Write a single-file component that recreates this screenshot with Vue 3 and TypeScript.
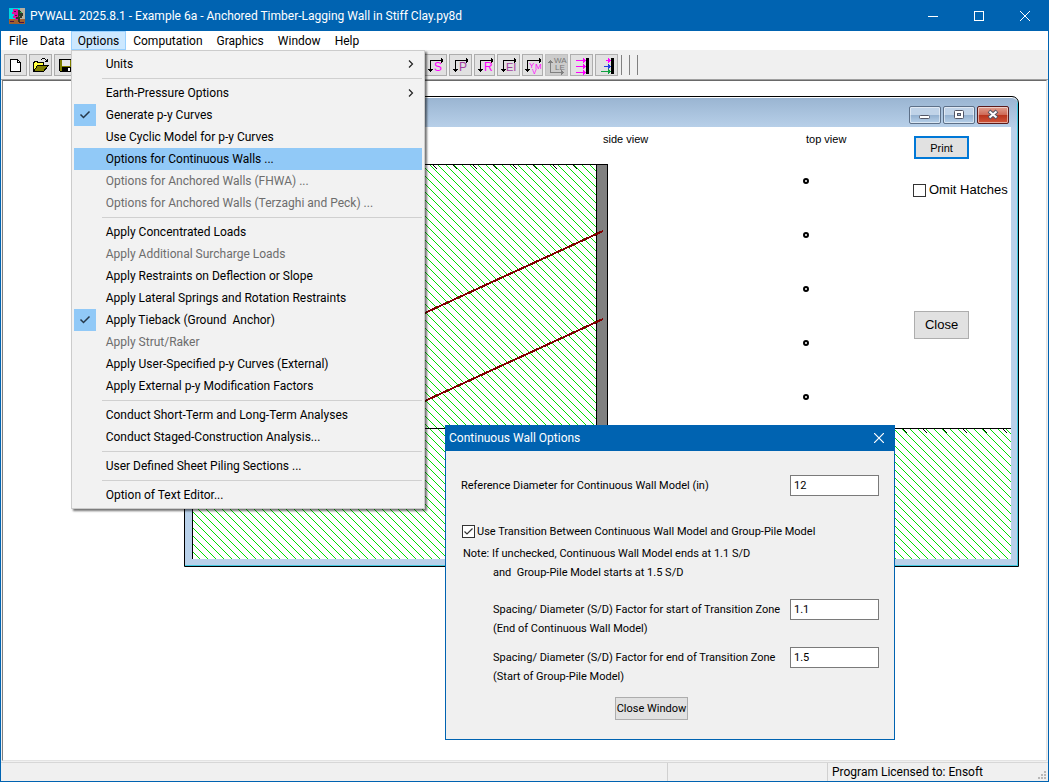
<script setup lang="ts">
import { ref } from 'vue'

interface MenuEntry {
  label: string
  checked?: boolean
  disabled?: boolean
  active?: boolean
  submenu?: boolean
}

const menus = ['File', 'Data', 'Options', 'Computation', 'Graphics', 'Window', 'Help']

const groups: MenuEntry[][] = [
  [{ label: 'Units', submenu: true }],
  [
    { label: 'Earth-Pressure Options', submenu: true },
    { label: 'Generate p-y Curves', checked: true },
    { label: 'Use Cyclic Model for p-y Curves' },
    { label: 'Options for Continuous Walls ...', active: true },
    { label: 'Options for Anchored Walls (FHWA) ...', disabled: true },
    { label: 'Options for Anchored Walls (Terzaghi and Peck) ...', disabled: true },
  ],
  [
    { label: 'Apply Concentrated Loads' },
    { label: 'Apply Additional Surcharge Loads', disabled: true },
    { label: 'Apply Restraints on Deflection or Slope' },
    { label: 'Apply Lateral Springs and Rotation Restraints' },
    { label: 'Apply Tieback (Ground  Anchor)', checked: true },
    { label: 'Apply Strut/Raker', disabled: true },
    { label: 'Apply User-Specified p-y Curves (External)' },
    { label: 'Apply External p-y Modification Factors' },
  ],
  [
    { label: 'Conduct Short-Term and Long-Term Analyses' },
    { label: 'Conduct Staged-Construction Analysis...' },
  ],
  [{ label: 'User Defined Sheet Piling Sections ...' }],
  [{ label: 'Option of Text Editor...' }],
]

const plotTools = [
  { id: 's', text: 'S', color: '#ff00ff', narrow: false },
  { id: 'p', text: 'P', color: '#a040a0', narrow: false },
  { id: 'r', text: 'R', color: '#ff00ff', narrow: true },
  { id: 'ei', text: 'EI', color: '#a040a0', narrow: false },
]

const upperTicks = Array.from({ length: 20 }, (_, i) => 1 + i * 20)
const lowerTicks = Array.from({ length: 21 }, (_, i) => 411 + i * 20)
const piles = [54, 108, 162, 216, 270]

const diameter = ref('12')
const startFactor = ref('1.1')
const endFactor = ref('1.5')
const useTransition = ref(true)
const omitHatches = ref(false)
</script>

<template>
  <div class="app">
    <header class="titlebar">
      <svg class="logo" width="16" height="16" shape-rendering="crispEdges">
        <rect width="16" height="16" fill="#00d8e0" />
        <rect x="11" width="5" height="12" fill="#b8b0a0" />
        <rect y="11" width="16" height="5" fill="#a06030" />
        <path d="M4 1h5v2h1v9H6v-2H4V8h1V6H3V4h1z" fill="#e010a0" />
        <path d="M9 2h2v1h1v2h2v3h-1v2h-2v4H9v-3H7V9h2z" fill="#303828" />
        <path d="M5 3h2v1H5zM6 7h2v1H6zM1 13h4v1H1zM10 14h5v1h-5z" fill="#501040" />
        <path d="M11 4h2v1h-2zM10 8h1v1h-1z" fill="#30a050" />
      </svg>
      <h1>PYWALL 2025.8.1 - Example 6a - Anchored Timber-Lagging Wall in Stiff Clay.py8d</h1>
      <div class="winbtns">
        <button aria-label="Minimize"><svg width="10" height="10" shape-rendering="crispEdges"><path d="M0 5.5h10" stroke="#fff" /></svg></button>
        <button aria-label="Maximize"><svg width="10" height="10" shape-rendering="crispEdges"><path d="M.5 .5h9v9h-9z" fill="none" stroke="#fff" /></svg></button>
        <button aria-label="Close"><svg width="10" height="10"><path d="M0 0l10 10M10 0L0 10" stroke="#fff" /></svg></button>
      </div>
    </header>

    <nav class="menubar">
      <div v-for="m in menus" :key="m" class="menu">
        <button :class="{ open: m === 'Options', short: m === 'File' || m === 'Data' }">{{ m }}</button>
        <div v-if="m === 'Options'" class="dropdown" role="menu">
          <div v-for="(g, gi) in groups" :key="gi" class="group">
            <button
              v-for="e in g"
              :key="e.label"
              role="menuitem"
              class="entry"
              :class="{ active: e.active }"
              :disabled="e.disabled"
            >
              <span class="mark" :class="{ on: e.checked }">
                <svg v-if="e.checked" width="12" height="10"><path d="M1.5 4.5l3 3L10.500 1.500" fill="none" stroke="#26384a" stroke-width="1.500" /></svg>
              </span>
              <span class="text">{{ e.label }}</span>
              <svg v-if="e.submenu" class="arrow" width="6" height="8"><path d="M1 .5L4.500 4L1 7.500" fill="none" stroke="#222" stroke-width="1.200" /></svg>
            </button>
          </div>
        </div>
      </div>
    </nav>

    <div class="toolbar" role="toolbar">
      <button class="tool" aria-label="New">
        <svg width="21" height="20" shape-rendering="crispEdges">
          <path d="M5.500 4.500h7l3 3v9h-10z" fill="#fff" stroke="#000" /><path d="M12.500 4.500v3h3" fill="none" stroke="#000" />
        </svg>
      </button>
      <button class="tool" aria-label="Open">
        <svg width="21" height="20" shape-rendering="crispEdges">
          <path d="M3.500 16.500v-9h1v-1h3v1h6v3" fill="#ffff40" stroke="#000" />
          <path d="M3.500 16.500l4-6h11l-5 6z" fill="#808000" stroke="#000" />
          <path d="M11 4.500h1M12 3.500h3M15 4.500h1M16 5.500h1M17 6.500h1M15 6.500h3M17.500 4v3" stroke="#000" />
        </svg>
      </button>
      <button class="tool" aria-label="Save">
        <svg width="21" height="20" shape-rendering="crispEdges">
          <path d="M4.500 4.500h13v12h-12l-1-1z" fill="#808000" stroke="#000" />
          <rect x="7" y="5" width="8" height="6" fill="#e8e8e8" /><path d="M7 12h9v4H7z" /><rect x="13" y="13" width="2" height="3" fill="#fff" />
        </svg>
      </button>
      <span class="toolgap"></span>
      <button v-for="t in plotTools" :key="t.id" class="tool" :class="{ narrow: t.narrow }" :aria-label="'Plot ' + t.text">
        <svg width="21" height="20" shape-rendering="crispEdges">
          <path d="M5.500 17V5.500H18M16.500 3v5M17.500 4v3M3 14.500h5M4 15.500h3" fill="none" stroke="#000" />
          <text :x="t.text === 'EI' ? 8 : 9" y="16" :font-size="t.text === 'EI' ? 11 : 12" :fill="t.color">{{ t.text }}</text>
        </svg>
      </button>
      <button class="tool narrow" aria-label="Plot deflection, moment and shear">
        <svg width="21" height="20" shape-rendering="crispEdges">
          <path d="M4.500 17V5.500H18M16.500 3v5M17.500 4v3M2 14.500h5M3 15.500h3" fill="none" stroke="#000" />
          <text x="6" y="13" font-size="8" fill="#ff00ff">Y</text>
          <text x="12" y="14" font-size="8" fill="#ff00ff">M</text>
          <text x="9" y="19" font-size="7" fill="#ff00ff">V</text>
        </svg>
      </button>
      <button class="tool off" aria-label="Wale" disabled>
        <svg width="21" height="20" shape-rendering="crispEdges">
          <path d="M4.500 5v12.500H18M2 7.500h5M3 6.500h3M15.500 15v5M16.500 16v3" fill="none" stroke="#808080" />
          <text x="8" y="8" font-size="8" fill="#777">WA</text>
          <text x="9" y="15" font-size="8" fill="#777">LE</text>
        </svg>
      </button>
      <button class="tool" aria-label="Distributed loads">
        <svg width="21" height="20" shape-rendering="crispEdges">
          <path d="M5 5.500h10M5 11.500h10M5 17.500h10M12.500 3v5M13.500 4v3M12.500 9v5M13.500 10v3M12.500 15v5M13.500 16v3" stroke="#ff00ff" />
          <rect x="15" y="3" width="3" height="16" />
        </svg>
      </button>
      <button class="tool" aria-label="Combined loads">
        <svg width="21" height="20" shape-rendering="crispEdges">
          <path d="M10 5.500h5M12.500 3v5M13.500 4v3" stroke="#ff00ff" />
          <path d="M8 11.500h7M12.500 9v5M13.500 10v3" stroke="#2040e0" />
          <path d="M5 16.500h10M12.500 14v5M13.500 15v3" stroke="#10a040" />
          <rect x="15" y="3" width="3" height="16" />
        </svg>
      </button>
      <i class="bar"></i><i class="bar"></i><i class="bar"></i>
    </div>

    <main class="desktop">
      <section class="child">
        <div class="childbar">
          <button aria-label="Minimize view"><svg width="30" height="16"><rect x="9.500" y="8.500" width="10" height="3" rx="1" fill="#fff" stroke="#535666" /></svg></button>
          <button aria-label="Restore view"><svg width="30" height="16"><rect x="10.500" y="3.500" width="9" height="8" rx="1" fill="#fff" stroke="#535666" /><rect x="13.500" y="6.500" width="3" height="2" fill="#9fbbd8" stroke="#535666" /></svg></button>
          <button class="red" aria-label="Close view"><svg width="30" height="16"><path d="M11 4l8 7M19 4l-8 7" stroke="#535666" stroke-width="4" /><path d="M11.500 4.500l7 6M18.500 4.500l-7 6" stroke="#fff" stroke-width="2" /></svg></button>
        </div>
        <div class="view">
          <svg class="drawing">
            <defs>
              <pattern id="hatch" width="8" height="8" patternUnits="userSpaceOnUse">
                <g fill="#00e000" shape-rendering="crispEdges">
                  <rect v-for="n in 8" :key="n" :x="n - 1" :y="n - 1" width="1" height="1" />
                </g>
              </pattern>
            </defs>
            <rect x="0" y="38" width="404" height="264" fill="url(#hatch)" />
            <rect x="0" y="302" width="100%" height="100%" fill="url(#hatch)" />
            <g shape-rendering="crispEdges" stroke="#000" fill="none">
              <path v-for="x in upperTicks" :key="'u' + x" :d="`M${x} 38.500h1m0 1h1m0 1h1m0 1h1`" />
              <path v-for="x in lowerTicks" :key="'l' + x" :d="`M${x} 302.500h1m0 1h1m0 1h1m0 1h1`" />
              <line x1="0" y1="301.500" x2="100%" y2="301.500" />
              <path d="M0 37.500h416M.5 37v395" />
              <rect x="404.500" y="37.500" width="11" height="330" fill="#808080" />
            </g>
            <path d="M148 225L411 104M148 313L411 192" stroke="#800000" stroke-width="2" shape-rendering="crispEdges" />
            <circle v-for="y in piles" :key="y" cx="614" :cy="y" r="2" fill="#fff" stroke="#000" stroke-width="2" />
            <text x="411" y="16" font-size="11">side view</text>
            <text x="614" y="16" font-size="11">top view</text>
          </svg>
          <div class="controls">
            <button class="print">Print</button>
            <label class="omit"><input v-model="omitHatches" type="checkbox" class="box" />Omit Hatches</label>
            <button class="close">Close</button>
          </div>
        </div>
      </section>

      <section class="dialog" role="dialog" aria-label="Continuous Wall Options">
        <div class="dialogbar">
          <h2>Continuous Wall Options</h2>
          <button aria-label="Close dialog"><svg width="10" height="10"><path d="M0 0l10 10M10 0L0 10" stroke="#fff" stroke-width="1.200" /></svg></button>
        </div>
        <form class="form" @submit.prevent>
          <div class="row">
            <label for="dia">Reference Diameter for Continuous Wall Model (in)</label>
            <input id="dia" v-model="diameter" type="text" />
          </div>
          <label class="transition"><input v-model="useTransition" type="checkbox" class="box" />Use Transition Between Continuous Wall Model and Group-Pile Model</label>
          <p class="note">Note: If unchecked, Continuous Wall Model ends at 1.1 S/D</p>
          <p class="note inner">and&nbsp; Group-Pile Model starts at 1.5 S/D</p>
          <div class="row factor">
            <label for="start">Spacing/ Diameter (S/D) Factor for start of Transition Zone<br />(End of Continuous Wall Model)</label>
            <input id="start" v-model="startFactor" type="text" />
          </div>
          <div class="row factor">
            <label for="end">Spacing/ Diameter (S/D) Factor for end of Transition Zone<br />(Start of Group-Pile Model)</label>
            <input id="end" v-model="endFactor" type="text" />
          </div>
          <button type="button" class="closewin">Close Window</button>
        </form>
      </section>
    </main>

    <footer class="status">
      <span class="pane"></span>
      <span class="pane mid"></span>
      <span class="pane license">Program Licensed to: Ensoft</span>
      <svg class="grip" width="9" height="9" shape-rendering="crispEdges" fill="#b8b8b8">
        <path d="M6 0h2v2H6zM3 3h2v2H3zM6 3h2v2H6zM0 6h2v2H0zM3 6h2v2H3zM6 6h2v2H6z" />
      </svg>
    </footer>
  </div>
</template>

<style>
body {
  margin: 0;
}
</style>

<style scoped>
* {
  box-sizing: border-box;
}
.app {
  display: flex;
  flex-direction: column;
  height: 100vh;
  border: 1px solid #0063b1;
  border-top: 0;
  background: #f0f0f0;
  color: #000;
  font: 12px/16px Roboto, sans-serif;
  overflow: hidden;
}
button {
  font: inherit;
  color: inherit;
  padding: 0;
  margin: 0;
  border: 0;
  border-radius: 0;
  background: none;
}
h1,
h2,
p {
  margin: 0;
  font: inherit;
}
svg {
  display: block;
}
.titlebar {
  display: flex;
  align-items: center;
  flex: 0 0 31px;
  padding-left: 8px;
  background: #0063b1;
  color: #fff;
}
.titlebar h1 {
  flex: 1;
  margin-left: 5px;
  white-space: nowrap;
}
.winbtns {
  display: flex;
}
.winbtns button {
  display: grid;
  place-items: center;
  width: 46px;
  height: 31px;
}
.menubar {
  display: flex;
  flex: 0 0 19px;
  padding-left: 2px;
  background: #fff;
}
.menu {
  position: relative;
}
.menu > button {
  height: 19px;
  padding: 1px 7px 0;
  line-height: 18px;
}
.menu > .short {
  padding: 1px 6px 0;
}
.menu > .open {
  padding: 0 6px;
  border: 1px solid #99d1ff;
  background: #cce8ff;
}
.dropdown {
  position: absolute;
  z-index: 10;
  top: 19px;
  left: 0;
  width: 354px;
  padding: 2px;
  border: 1px solid #ccc;
  background: #f2f2f2;
  box-shadow: 2px 2px 2px rgba(0, 0, 0, 0.55);
}
.group + .group::before {
  content: "";
  display: block;
  height: 1px;
  margin: 3px 0 3px 28px;
  background: #d0d0d0;
}
.entry {
  display: flex;
  align-items: center;
  width: 100%;
  height: 22px;
  text-align: left;
}
.entry.active {
  background: #91c9f7;
}
.entry:disabled {
  color: #6d6d6d;
}
.mark {
  display: grid;
  place-items: center;
  width: 22px;
  height: 22px;
  margin-right: 10px;
}
.mark.on {
  background: #91c9f7;
}
.text {
  flex: 1;
  white-space: pre;
}
.arrow {
  margin-right: 8px;
}
.toolbar {
  display: flex;
  flex: 0 0 30px;
  gap: 2px;
  padding: 4px 3px 3px;
  border-bottom: 1px solid #a0a0a0;
}
.tool {
  flex: none;
  width: 23px;
  height: 22px;
  border: 1px solid #adadad;
  background: #e1e1e1;
}
.tool.narrow {
  width: 21px;
}
.tool.off {
  background: #ccc;
  border-color: #bfbfbf;
}
.tool text {
  font-family: "Liberation Sans", Arial, sans-serif;
}
.toolgap {
  width: 343px;
}
.bar {
  width: 1px;
  height: 20px;
  margin: 1px 4px 0 1px;
  background: #808080;
}
.desktop {
  position: relative;
  flex: 1;
  margin: 0 1px 1px;
  border: 1px solid #e3e3e3;
  border-top-color: #696969;
  border-left-color: #808080;
  background: #fff;
}
.child {
  position: absolute;
  top: 15px;
  left: 181px;
  width: 835px;
  height: 471px;
  display: flex;
  flex-direction: column;
  padding: 0 7px 7px;
  border: 1px solid #000;
  border-radius: 7px 7px 0 0;
  background: linear-gradient(#99b4d1, #b9d1ea 32px);
  box-shadow: inset 0 1px #fff, inset -1px -1px #40c8e0;
}
.childbar {
  display: flex;
  justify-content: flex-end;
  gap: 2px;
  height: 30px;
  padding: 9px 2px 0 0;
}
.childbar button {
  width: 32px;
  height: 18px;
  border: 1px solid #5d7088;
  border-radius: 2px;
  background: linear-gradient(#c0d3e8 48%, #93b0cf 50%, #b6d0ea);
  box-shadow: inset 0 0 0 1px rgba(255, 255, 255, 0.5);
}
.childbar .red {
  border-color: #5a1a1a;
  background: linear-gradient(#e0a090 0, #cf6a57 48%, #b8331c 50%, #d0553a);
}
.view {
  position: relative;
  flex: 1;
  background: #fff;
}
.drawing {
  position: absolute;
  inset: 0;
  width: 100%;
  height: 100%;
  font-family: "Liberation Sans", Arial, sans-serif;
}
.controls {
  position: relative;
  display: flex;
  flex-direction: column;
  align-items: flex-start;
  width: 98px;
  margin-left: auto;
  padding-top: 9px;
  font: 13px/16px "Liberation Sans", Arial, sans-serif;
}
.print {
  width: 55px;
  height: 23px;
  margin-left: 1px;
  border: 2px solid #0078d7;
  background: #e1e1e1;
  font-size: 11px;
}
.omit {
  display: flex;
  align-items: center;
  gap: 3px;
  margin-top: 23px;
  white-space: nowrap;
}
.close {
  width: 55px;
  height: 28px;
  margin: 113px 0 0 1px;
  border: 1px solid #adadad;
  background: #e1e1e1;
}
.box {
  appearance: none;
  flex: none;
  width: 13px;
  height: 13px;
  margin: 0;
  border: 1px solid #333;
  background: #fff;
}
.box:checked {
  background: #fff url("data:image/svg+xml,%3Csvg xmlns='http://www.w3.org/2000/svg' width='11' height='11'%3E%3Cpath d='M1.500 5.500l2.500 2.500 5.500-5.500' fill='none' stroke='%23333' stroke-width='1.200'/%3E%3C/svg%3E");
}
.dialog {
  position: absolute;
  top: 344px;
  left: 442px;
  width: 450px;
  border: 1px solid #0063b1;
  background: #f0f0f0;
}
.dialogbar {
  display: flex;
  align-items: center;
  justify-content: space-between;
  height: 25px;
  padding: 0 10px 1px 3px;
  background: #0063b1;
  color: #fff;
}
.form {
  display: flex;
  flex-direction: column;
  padding: 24px 15px 19px;
  font: 11px/19px Roboto, sans-serif;
}
.row {
  display: flex;
  align-items: flex-start;
  justify-content: space-between;
  white-space: nowrap;
}
.row label {
  padding-top: 1px;
}
.row input {
  width: 89px;
  height: 21px;
  padding: 0 3px;
  border: 1px solid #7a7a7a;
  background: #fff;
  font: inherit;
}
.transition {
  display: flex;
  align-items: center;
  gap: 2px;
  margin-top: 26px;
  padding-left: 1px;
  white-space: nowrap;
}
.note {
  padding: 3px 0 0 2px;
}
.note.inner {
  padding: 0 0 0 32px;
}
.factor {
  margin-top: 17px;
  padding-left: 32px;
}
.factor + .factor {
  margin-top: 9px;
}
.closewin {
  align-self: flex-start;
  width: 73px;
  height: 23px;
  margin: 11px 0 0 154px;
  border: 1px solid #adadad;
  background: #e1e1e1;
  white-space: nowrap;
}
.status {
  display: flex;
  flex: 0 0 19px;
  border-top: 1px solid #d7d7d7;
}
.pane {
  flex: 1;
  line-height: 18px;
  border-right: 1px solid #d0d0d0;
}
.pane.mid {
  flex: 0 0 160px;
}
.pane.license {
  flex: 0 0 210px;
  padding-left: 4px;
  border: 0;
}
.grip {
  align-self: flex-end;
  margin: 0 1px 1px 0;
}
</style>
